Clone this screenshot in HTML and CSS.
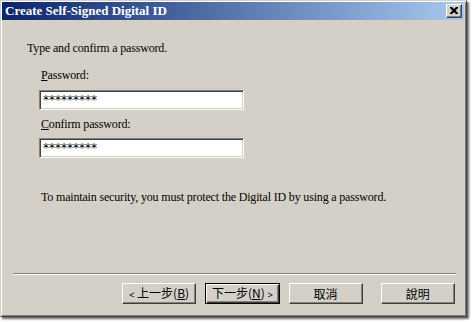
FILE: index.html
```html
<!DOCTYPE html>
<html>
<head>
<meta charset="utf-8">
<link rel="stylesheet" href="styles.css">
</head>
<body>
<div class="window">
  <div class="titlebar">
    <span class="title">Create Self-Signed Digital ID</span>
    <span class="close"><svg width="8" height="7" viewBox="0 0 8 7"><path d="M0 0h2l2 2 2-2h2v1l-2.5 2.5L8 6v1H6L4 5 2 7H0V6l2.5-2.5L0 1z" fill="#000"/></svg></span>
  </div>
  <div class="content">
    <div class="intro">Type and confirm a password.</div>
    <div class="fields">
      <div class="label"><u>P</u>assword:</div>
      <div class="field">*********</div>
      <div class="label second"><u>C</u>onfirm password:</div>
      <div class="field">*********</div>
    </div>
    <div class="note">To maintain security, you must protect the Digital ID by using a password.</div>
  </div>
  <div class="separator"></div>
  <div class="buttons">
    <button class="btn"><span class="arrow">&lt;</span> 上一步(<u>B</u>)</button>
    <button class="btn default">下一步(<u>N</u>) <span class="arrow">&gt;</span></button>
    <button class="btn">取消</button>
    <button class="btn help">說明</button>
  </div>
</div>
</body>
</html>
```
FILE: styles.css
```css
html, body {
  margin: 0;
  padding: 0;
  background: #ffffff;
}
body {
  width: 473px;
  height: 322px;
  overflow: hidden;
  font-family: "Liberation Serif", "Noto Sans CJK TC", serif;
  font-size: 12px;
  color: #000;
}
.window {
  box-sizing: border-box;
  width: 467px;
  height: 317px;
  background: #d4d0c8;
  border-top: 1px solid #d4d0c8;
  border-left: 1px solid #d4d0c8;
  border-right: 1px solid #404040;
  border-bottom: 1px solid #404040;
  box-shadow: inset 1px 1px 0 #ffffff, inset -1px -1px 0 #808080, 2px 2px 2px rgba(0,0,0,0.6);
  padding: 1px 2px 2px 1px;
  display: flex;
  flex-direction: column;
}
.titlebar {
  height: 18px;
  background: linear-gradient(to right, #0a246a, #a6caf0);
  display: flex;
  align-items: center;
  justify-content: space-between;
  padding: 0 2px 0 3px;
}
.title {
  color: #ffffff;
  font-family: "Liberation Serif", serif;
  font-weight: bold;
  font-size: 13px;
  line-height: 18px;
}
.close {
  box-sizing: border-box;
  width: 16px;
  height: 14px;
  background: #d4d0c8;
  border-top: 1px solid #ffffff;
  border-left: 1px solid #ffffff;
  border-right: 1px solid #404040;
  border-bottom: 1px solid #404040;
  box-shadow: inset -1px -1px 0 #808080;
  display: flex;
  align-items: center;
  justify-content: center;
}
.close svg { display: block; margin-top: -1px; }
.content {
  padding: 21px 0 0 25px;
  line-height: 14px;
  letter-spacing: -0.17px;
}
.fields {
  padding: 13px 0 0 12px;
  width: 205px;
}
.label {
  padding-left: 2px;
  margin-bottom: 8px;
}
.label.second {
  margin-top: 7px;
  margin-bottom: 7px;
}
.field {
  box-sizing: border-box;
  height: 20px;
  width: 205px;
  background: #ffffff;
  border-top: 1px solid #808080;
  border-left: 1px solid #808080;
  border-right: 1px solid #ffffff;
  border-bottom: 1px solid #ffffff;
  box-shadow: inset 1px 1px 0 #404040, inset -1px -1px 0 #d4d0c8;
  font-family: "DejaVu Sans", sans-serif;
  font-size: 12px;
  line-height: 18px;
  letter-spacing: 0;
  padding-left: 3px;
  color: #000;
}
.note {
  margin-top: 32px;
  padding-left: 14px;
}
.separator {
  margin: 69px 8px 0 11px;
  height: 1px;
  background: #808080;
  border-bottom: 1px solid #ffffff;
}
.buttons {
  display: flex;
  margin-top: 8px;
  padding-left: 120px;
}
.btn {
  box-sizing: border-box;
  width: 75px;
  height: 21px;
  margin: 0 9px 0 0;
  padding: 0;
  background: #d4d0c8;
  border-top: 1px solid #ffffff;
  border-left: 1px solid #ffffff;
  border-right: 1px solid #404040;
  border-bottom: 1px solid #404040;
  box-shadow: inset -1px -1px 0 #808080;
  font-family: "Noto Sans CJK TC", sans-serif;
  font-size: 12px;
  line-height: 17px;
  color: #000;
}
.btn.default {
  border: 1px solid #000;
  box-shadow: inset 1px 1px 0 #ffffff, inset -1px -1px 0 #404040, inset -2px -2px 0 #808080;
}
.btn.help { margin-left: 9px; }
.arrow {
  font-family: "Liberation Sans", sans-serif;
  font-size: 9px;
}
```
